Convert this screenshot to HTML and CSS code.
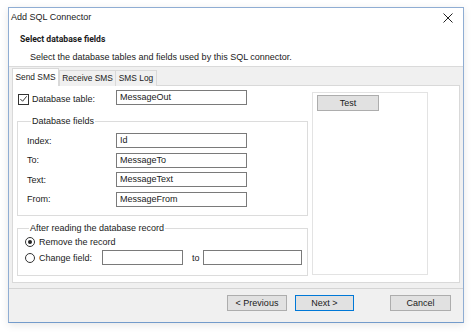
FILE: index.html
```html
<!DOCTYPE html>
<html>
<head>
<meta charset="utf-8">
<link rel="stylesheet" href="styles.css">
</head>
<body>
<div class="win">
  <div class="titlebar">
    <span class="title">Add SQL Connector</span>
    <svg class="close" width="10" height="10" viewBox="0 0 10 10"><path d="M0.5 0.5 L9.5 9.5 M9.5 0.5 L0.5 9.5" stroke="#222" stroke-width="1" fill="none"/></svg>
  </div>
  <div class="header">
    <div class="h1">Select database fields</div>
    <div class="h2">Select the database tables and fields used by this SQL connector.</div>
  </div>
  <div class="body">
    <div class="tabs">
      <div class="tab active t1">Send SMS</div>
      <div class="tab t2">Receive SMS</div>
      <div class="tab t3">SMS Log</div>
    </div>
    <div class="panel">
      <div class="left">
        <div class="row first">
          <span class="check"><svg width="10" height="10" viewBox="0 0 10 10"><path d="M1.5 5 L4 7.5 L8.5 2" stroke="#222" stroke-width="1" fill="none"/></svg></span>
          <span class="lbl cb-lbl">Database table:</span>
          <div class="tb">MessageOut</div>
        </div>
        <fieldset class="grp g1">
          <legend>Database fields</legend>
          <div class="row"><span class="lbl fl">Index:</span><div class="tb">Id</div></div>
          <div class="row"><span class="lbl fl">To:</span><div class="tb">MessageTo</div></div>
          <div class="row"><span class="lbl fl">Text:</span><div class="tb">MessageText</div></div>
          <div class="row"><span class="lbl fl">From:</span><div class="tb">MessageFrom</div></div>
        </fieldset>
        <fieldset class="grp g2">
          <legend>After reading the database record</legend>
          <div class="row rrow"><span class="radio on"></span><span class="lbl">Remove the record</span></div>
          <div class="row rrow"><span class="radio"></span><span class="lbl rl">Change field:</span><div class="tb tb-a"></div><span class="lbl to">to</span><div class="tb tb-b"></div></div>
        </fieldset>
      </div>
      <div class="right">
        <div class="btn test">Test</div>
      </div>
    </div>
  </div>
  <div class="footer">
    <div class="btn prev">&lt; Previous</div>
    <div class="btn next">Next &gt;</div>
    <div class="btn cancel">Cancel</div>
  </div>
</div>
</body>
</html>
```

FILE: styles.css
```css
* { box-sizing: border-box; }
html, body { margin: 0; padding: 0; background: #fff; }
body {
  font-family: "Liberation Sans", Arial, sans-serif;
  font-size: 9px;
  color: #1a1a1a;
  width: 474px;
  height: 335px;
  overflow: hidden;
}
.win {
  margin: 7px 0 0 8px;
  width: 456px;
  height: 316px;
  border: 1px solid #8fadd3;
  border-bottom-color: #739bcb;
  box-shadow: 0 2px 8px rgba(0,0,0,0.10);
  background: #f0f0f0;
  display: flex;
  flex-direction: column;
}
.titlebar {
  height: 19px;
  background: #fff;
  display: flex;
  align-items: center;
  justify-content: space-between;
  padding: 0 10px 0 2px;
}
.title { font-size: 9px; line-height: 19px; }
.close { display: block; }
.header {
  background: #fff;
  padding: 5px 0 2px 11px;
  border-bottom: 1px solid #dadada;
  height: 40px;
}
.h1 {
  font-family: Roboto, "Liberation Sans", sans-serif;
  font-weight: 700;
  font-size: 8.6px;
  line-height: 14px;
}
.h2 { line-height: 14px; margin-top: 4px; padding-left: 10px; }
.body {
  height: 222px;
  padding: 1px 3px 0 3px;
  border-bottom: 1px solid #d4d4d4;
}
.tabs {
  display: flex;
  align-items: flex-end;
  height: 18px;
  position: relative;
  z-index: 1;
  margin-bottom: -1px;
}
.tab {
  height: 16px;
  line-height: 14px;
  text-align: center;
  white-space: nowrap;
  font-size: 8.4px;
  border: 1px solid #d9d9d9;
  border-bottom: none;
  background: #f0f0f0;
}
.tab.active {
  height: 18px;
  background: #fff;
  line-height: 16px;
}
.t1 { width: 47px; }
.t2 { width: 57px; }
.t3 { width: 42px; margin-left: -1px; }
.panel {
  height: 198px;
  background: #fff;
  border: 1px solid #d9d9d9;
  display: flex;
  padding: 4px 0 0 4px;
}
.left { width: 291px; }
.row {
  display: flex;
  align-items: center;
  height: 15px;
}
.check {
  width: 11px;
  height: 11px;
  border: 1px solid #333;
  margin-left: 1px;
  margin-top: 3px;
  display: flex;
  align-items: center;
  justify-content: center;
}
.check svg { display: block; }
.lbl { white-space: nowrap; }
.cb-lbl { margin-left: 3px; width: 84px; margin-top: 3px; }
.tb {
  width: 131px;
  height: 15px;
  border: 1px solid #7a7a7a;
  background: #fff;
  line-height: 13px;
  padding-left: 3px;
  white-space: nowrap;
}
.grp {
  margin: 0;
  padding: 0;
  border: 1px solid #dcdcdc;
  min-width: 0;
}
.grp legend {
  padding: 0 1px;
  margin-left: 4px;
  line-height: 12px;
}
.g1 {
  margin-top: 10px;
  height: 101px;
  padding: 6px 0 0 9px;
  display: flex;
  flex-direction: column;
  gap: 4.5px;
}
.fl { width: 89px; }
.g2 {
  margin-top: 6px;
  height: 54px;
  padding: 0 0 0 7px;
  display: flex;
  flex-direction: column;
  gap: 1px;
}
.rrow { height: 15px; }
.radio {
  width: 10px;
  height: 10px;
  border: 1px solid #333;
  border-radius: 50%;
  margin-right: 4px;
  position: relative;
  background: #fff;
}
.radio.on::after {
  content: "";
  position: absolute;
  left: 2px; top: 2px;
  width: 4px; height: 4px;
  border-radius: 50%;
  background: #222;
}
.rl { width: 63px; }
.tb-a { width: 81px; }
.to { margin: 0 4px 0 9px; width: 7px; }
.tb-b { width: 99px; }
.right {
  margin: 2px 0 0 4px;
  width: 116px;
  height: 183px;
  border: 1px solid #e3e3e3;
  padding: 2px 0 0 4px;
}
.btn {
  background: #e1e1e1;
  border: 1px solid #adadad;
  text-align: center;
  height: 16px;
  line-height: 14px;
  white-space: nowrap;
}
.test { width: 62px; }
.footer {
  flex: 1;
  display: flex;
  padding: 6px 0 0 218px;
}
.prev { width: 60px; }
.next { width: 59px; margin-left: 8px; border-color: #0078d7; }
.cancel { width: 61px; margin-left: 36px; }
```
